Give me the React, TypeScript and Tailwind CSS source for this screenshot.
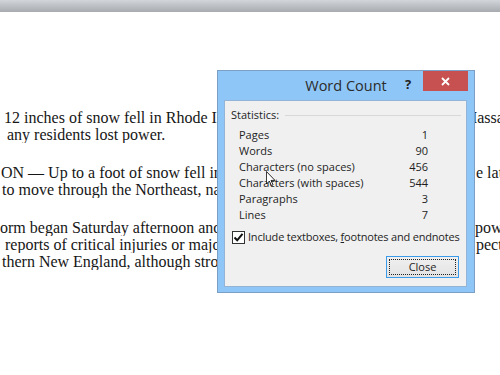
import React from "react";

// Word document behind a Windows 8 "Word Count" dialog.

const stats: [string, string][] = [
  ["Pages", "1"],
  ["Words", "90"],
  ["Characters (no spaces)", "456"],
  ["Characters (with spaces)", "544"],
  ["Paragraphs", "3"],
  ["Lines", "7"],
];

function DocLine({ left, right, pad, rightClass }: { left: string; right?: string; pad: string; rightClass: string }) {
  return (
    <div className="flex h-[17px] whitespace-nowrap">
      <span className={`${rightClass} shrink-0 overflow-hidden ${pad}`}>{left}</span>
      {right && <span className="shrink-0">{right}</span>}
    </div>
  );
}

function Cursor() {
  return (
    <svg className="absolute left-[266px] top-[171px]" width="10" height="16" viewBox="0 0 12 19">
      <path d="M0.5 0.5 L0.5 15.5 L4 12 L6.5 17.5 L8.5 16.5 L6 11.2 L10.8 11.2 Z" fill="#fff" stroke="#000" strokeWidth="1" />
    </svg>
  );
}

export default function App() {
  return (
    <div className="relative h-[375px] w-[500px] overflow-hidden bg-white">
      <div className="h-[12px] bg-gradient-to-b from-[#d2d5d9] to-[#a7abb0]" />

      {/* document text, scrolled so that the start of each line is cut off */}
      <div className="pt-[97px] font-['Liberation_Serif',serif] text-[16px] leading-[17px] text-[#161616]">
        <DocLine pad="pl-[4px]" rightClass="w-[463px]" left="12 inches of snow fell in Rhode Island" right="Massachusetts" />
        <DocLine pad="pl-[7px]" rightClass="w-[476px]" left="any residents lost power." />
        <div className="mt-[21px]">
          <DocLine pad="pl-[1px]" rightClass="w-[476px]" left="ON — Up to a foot of snow fell in New England" right="e latest" />
          <DocLine pad="pl-[2px]" rightClass="w-[476px]" left="to move through the Northeast, national" />
        </div>
        <div className="mt-[21px]">
          <DocLine pad="pl-0" rightClass="w-[475px]" left="orm began Saturday afternoon and continued" right="pow" />
          <DocLine pad="pl-[5px]" rightClass="w-[476px]" left="reports of critical injuries or major damage" right="pect" />
          <DocLine pad="pl-[2px]" rightClass="w-[476px]" left="thern New England, although strong winds" />
        </div>
      </div>

      {/* Word Count dialog */}
      <div className="absolute left-[217px] top-[70px] flex h-[223px] w-[258px] flex-col border border-[#7b9fc5] bg-[#8ec6f7] font-['Open_Sans',sans-serif] text-[#1e1e1e]">
        <div className="relative flex h-[29px] items-center justify-center">
          <span className="text-[14.5px] text-[#2b2b2b]">Word Count</span>
          <span className="absolute left-[187px] top-[4px] text-[13px] font-bold text-[#222]">?</span>
          <div className="absolute right-[6px] top-0 flex h-[20px] w-[45px] items-center justify-center bg-[#c75050]">
            <svg width="9" height="9" viewBox="0 0 9 9">
              <path d="M1 1 L8 8 M8 1 L1 8" stroke="#fff" strokeWidth="1.8" />
            </svg>
          </div>
        </div>

        <div className="ml-[6px] flex h-[187px] w-[243px] flex-col border border-[#93b4d7] bg-[#f0f0f0] text-[11px] leading-[16px]">
          <div className="mt-[6px] flex h-[16px] items-center pl-[6px] pr-[5px]">
            <span>Statistics:</span>
            <div className="ml-[6px] h-px flex-1 bg-[#d8d8d8]" />
          </div>

          <div className="mt-[4px] flex flex-col pl-[14px] pr-[38px]">
            {stats.map(([label, value]) => (
              <div key={label} className="flex h-[16px] items-center justify-between">
                <span>{label}</span>
                <span>{value}</span>
              </div>
            ))}
          </div>

          <div className="mt-[6px] flex h-[16px] items-center gap-[3px] whitespace-nowrap pl-[7px]">
            <div className="flex h-[13px] w-[13px] shrink-0 items-center justify-center border border-[#333] bg-white">
              <svg width="11" height="11" viewBox="0 0 11 11">
                <path d="M1.5 5.5 L4.2 8.3 L9.5 1.8" fill="none" stroke="#111" strokeWidth="2" />
              </svg>
            </div>
            <span className="tracking-[-0.2px]">
              Include textboxes, <span className="underline">f</span>ootnotes and endnotes
            </span>
          </div>

          <div className="mr-[7px] mt-[11px] flex justify-end">
            <div className="flex h-[22px] w-[73px] items-center justify-center border border-[#3c9be8] bg-gradient-to-b from-[#f0f0f0] to-[#e3e3e3] p-[2px]">
              <div className="flex h-full w-full items-center justify-center border border-dotted border-[#222]">
                Close
              </div>
            </div>
          </div>
        </div>
      </div>

      <Cursor />
    </div>
  );
}
